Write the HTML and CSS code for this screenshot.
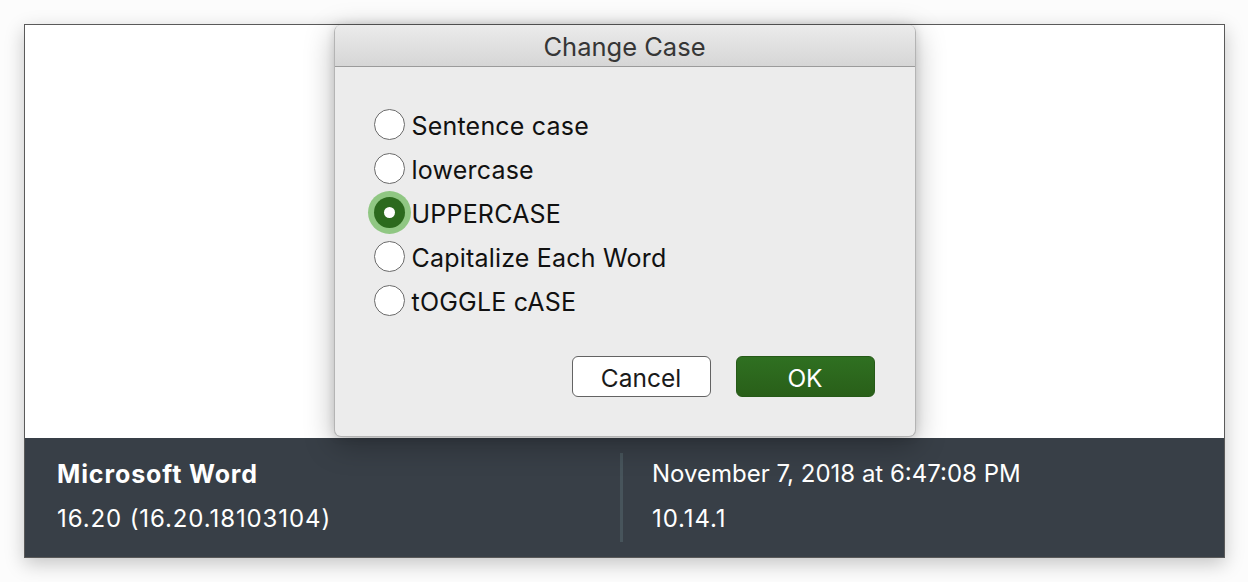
FILE: index.html
```html
<!DOCTYPE html>
<html lang="en">
<head>
<meta charset="utf-8">
<title>Change Case</title>
<link rel="stylesheet" href="styles.css">
</head>
<body>
<div class="frame">
  <div class="stage">
    <div class="dialog">
      <div class="titlebar">Change Case</div>
      <div class="dialog-body">
        <div class="options">
          <label class="option"><span class="radio"></span><span class="label">Sentence case</span></label>
          <label class="option"><span class="radio"></span><span class="label">lowercase</span></label>
          <label class="option"><span class="radio checked"><span class="dot"></span></span><span class="label">UPPERCASE</span></label>
          <label class="option"><span class="radio"></span><span class="label">Capitalize Each Word</span></label>
          <label class="option"><span class="radio"></span><span class="label">tOGGLE cASE</span></label>
        </div>
        <div class="buttons">
          <button class="btn btn-cancel">Cancel</button>
          <button class="btn btn-ok">OK</button>
        </div>
      </div>
    </div>
  </div>
  <div class="infobar">
    <div class="info-col info-left">
      <div class="app-name">Microsoft Word</div>
      <div class="info-line digits">16.20 (16.20.18103104)</div>
    </div>
    <div class="divider"></div>
    <div class="info-col info-right">
      <div class="info-line">November 7, 2018 at 6:47:08 PM</div>
      <div class="info-line digits">10.14.1</div>
    </div>
  </div>
</div>
</body>
</html>
```

FILE: styles.css
```css
* { box-sizing: border-box; }

html, body {
  margin: 0;
  padding: 0;
}

body {
  background: #fcfcfc;
  width: 1248px;
  height: 582px;
  padding: 24px 0 0 24px;
  font-family: Inter, "Liberation Sans", Arial, sans-serif;
  overflow: hidden;
}

.frame {
  width: 1201px;
  height: 534px;
  border: 1px solid #5a5a5a;
  background: #ffffff;
  box-shadow: 0 6px 18px rgba(0, 0, 0, 0.22);
  display: flex;
  flex-direction: column;
}

.stage {
  height: 413px;
  display: flex;
  justify-content: center;
  background: #ffffff;
}

.dialog {
  width: 582px;
  height: 412px;
  background: #ececec;
  border-radius: 7px;
  border: 1px solid #b4b4b4;
  border-top: none;
  box-shadow: 0 8px 30px rgba(0, 0, 0, 0.28), 0 0 10px rgba(0, 0, 0, 0.12);
  display: flex;
  flex-direction: column;
  overflow: hidden;
  position: relative;
  z-index: 1;
}

.titlebar {
  height: 42px;
  background: linear-gradient(#ebebeb, #d6d6d6);
  border-bottom: 1px solid #9b9b9b;
  color: #363636;
  font-size: 25.5px;
  display: flex;
  align-items: center;
  justify-content: center;
  padding-top: 2px;
}

.dialog-body {
  flex: 1;
  padding: 35px 40px 0 39px;
  display: flex;
  flex-direction: column;
}

.options {
  display: flex;
  flex-direction: column;
}

.option {
  height: 44px;
  display: flex;
  align-items: center;
  gap: 7px;
}

.radio {
  width: 31px;
  height: 31px;
  border-radius: 50%;
  background: #ffffff;
  border: 1.5px solid #6b6b6b;
  display: flex;
  align-items: center;
  justify-content: center;
  flex: none;
}

.radio.checked {
  background: #2c6a1e;
  border: none;
  box-shadow: 0 0 0 6px #90c783;
}

.dot {
  width: 11px;
  height: 11px;
  border-radius: 50%;
  background: #ffffff;
}

.label {
  font-size: 25px;
  color: #111111;
  letter-spacing: 0.2px;
  padding-top: 4px;
}

.buttons {
  margin-top: 34px;
  display: flex;
  justify-content: flex-end;
  gap: 25px;
}

.btn {
  width: 139px;
  height: 41px;
  border-radius: 6px;
  font-family: inherit;
  font-size: 24.5px;
  padding: 2px 0 0;
}

.btn-cancel {
  background: #ffffff;
  border: 1.5px solid #636363;
  color: #1a1a1a;
}

.btn-ok {
  background: linear-gradient(#2f7021, #295f19);
  border: 1px solid #265a18;
  color: #ffffff;
}

.infobar {
  flex: 1;
  background: #383f47;
  display: flex;
  align-items: center;
  padding-bottom: 3px;
  color: #ffffff;
}

.info-col {
  display: flex;
  flex-direction: column;
  gap: 15px;
}

.info-left {
  width: 595px;
  padding-left: 32px;
}

.info-right {
  padding-left: 29px;
}

.divider {
  width: 3px;
  height: 89px;
  margin-top: 3px;
  background: #47545b;
}

.app-name {
  font-size: 25px;
  font-weight: 700;
  line-height: 30px;
  letter-spacing: 0.9px;
}

.info-line {
  font-size: 24px;
  line-height: 30px;
}

.info-line.digits {
  letter-spacing: 0.9px;
}
```
